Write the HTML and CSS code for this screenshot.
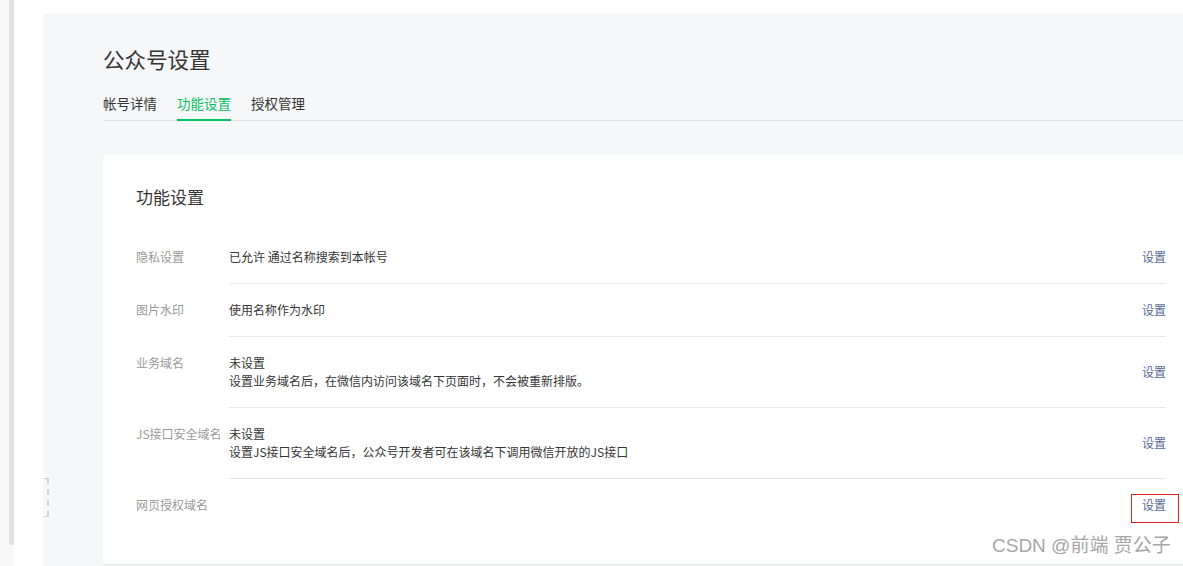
FILE: index.html
```html
<!DOCTYPE html>
<html lang="zh-CN">
<head>
<meta charset="utf-8">
<title>公众号设置</title>
<link rel="stylesheet" href="styles.css">
</head>
<body>
<div class="shell">
  <div class="edge"></div>
  <div class="scroll"><div class="thumb"></div></div>
  <div class="gutter"></div>
  <main class="main">
    <h1 class="page-title">公众号设置</h1>
    <nav class="tabs">
      <a class="tab">帐号详情</a>
      <a class="tab active">功能设置</a>
      <a class="tab">授权管理</a>
    </nav>
    <section class="card">
      <h2 class="card-title">功能设置</h2>
      <div class="rows">
        <div class="row">
          <div class="label">隐私设置</div>
          <div class="body">
            <div class="value">已允许 通过名称搜索到本帐号</div>
            <a class="action">设置</a>
          </div>
        </div>
        <div class="row">
          <div class="label">图片水印</div>
          <div class="body">
            <div class="value">使用名称作为水印</div>
            <a class="action">设置</a>
          </div>
        </div>
        <div class="row">
          <div class="label">业务域名</div>
          <div class="body">
            <div class="value">未设置<br>设置业务域名后，在微信内访问该域名下页面时，不会被重新排版。</div>
            <a class="action">设置</a>
          </div>
        </div>
        <div class="row">
          <div class="label">JS接口安全域名</div>
          <div class="body">
            <div class="value">未设置<br>设置JS接口安全域名后，公众号开发者可在该域名下调用微信开放的JS接口</div>
            <a class="action">设置</a>
          </div>
        </div>
        <div class="row last">
          <div class="label">网页授权域名</div>
          <div class="body">
            <div class="value"></div>
            <a class="action">设置</a>
          </div>
        </div>
      </div>
    </section>
  </main>
</div>
<div class="handle"></div>
<div class="highlight"></div>
<div class="watermark">CSDN @前端 贾公子</div>
</body>
</html>
```

FILE: styles.css
```css
* { box-sizing: border-box; }
html, body {
  margin: 0;
  padding: 0;
  width: 1183px;
  height: 566px;
  overflow: hidden;
  background: #ffffff;
  font-family: "Noto Sans CJK SC", "Noto Sans", "Liberation Sans", sans-serif;
  color: #353535;
}
body { position: relative; }
.shell {
  display: flex;
  height: 566px;
}
.edge {
  width: 9px;
  flex: none;
  background: #f8f8f8;
}
.scroll {
  width: 5px;
  flex: none;
  background: #f8f8f8;
}
.thumb {
  height: 545px;
  background: #e1e1e1;
  border-radius: 0 0 2px 2px;
}
.gutter {
  width: 29px;
  flex: none;
  background: #ffffff;
}
.main {
  flex: 1;
  margin-top: 14px;
  background: #f6f7f9;
  padding: 30px 0 0 60px;
  min-width: 0;
}
.page-title {
  margin: 0;
  font-size: 21.5px;
  line-height: 30px;
  font-weight: 400;
  color: #353535;
}
.tabs {
  display: flex;
  gap: 20px;
  margin-top: 19px;
  border-bottom: 1px solid #e0e1e4;
}
.tab {
  font-size: 13.5px;
  line-height: 20px;
  padding-bottom: 6px;
  border-bottom: 2px solid transparent;
  margin-bottom: -1px;
  color: #353535;
}
.tab.active {
  color: #07c160;
  border-bottom-color: #07c160;
}
.card {
  margin-top: 34px;
  width: 1100px;
  height: 410px;
  background: #ffffff;
  border-radius: 2px;
  border-bottom: 1px solid #ececef;
  padding: 30px 0 0 33px;
}
.card-title {
  margin: 0;
  font-size: 17px;
  line-height: 24px;
  font-weight: 400;
  color: #353535;
}
.rows {
  margin-top: 22px;
  width: 1030px;
}
.row {
  display: flex;
  font-size: 12px;
  line-height: 18px;
}
.label {
  width: 93px;
  flex: none;
  color: #9a9a9a;
  padding: 17px 0 16px;
}
.body {
  flex: 1;
  display: flex;
  align-items: center;
  justify-content: space-between;
  border-bottom: 1px solid #e7e7eb;
  padding: 17px 0 17px;
  min-height: 53px;
}
.row.last .body { border-bottom: none; align-items: flex-start; }
.value { color: #353535; }
.action {
  color: #576b95;
  flex: none;
}
.handle {
  position: absolute;
  left: 44px;
  top: 478px;
  width: 5px;
  height: 39px;
  border-right: 2px dashed #d2d2d2;
  border-top: 1px solid #d2d2d2;
  border-bottom: 1px solid #d2d2d2;
}
.highlight {
  position: absolute;
  left: 1131px;
  top: 494px;
  width: 48px;
  height: 29px;
  border: 1px solid #e02020;
}
.watermark {
  position: absolute;
  left: 992px;
  top: 532px;
  font-family: "Liberation Sans", "Noto Sans CJK SC", sans-serif;
  font-size: 19px;
  line-height: 28px;
  color: #a6a6a6;
  text-shadow: 1px 1px 1px #ffffff;
  white-space: nowrap;
}
```
